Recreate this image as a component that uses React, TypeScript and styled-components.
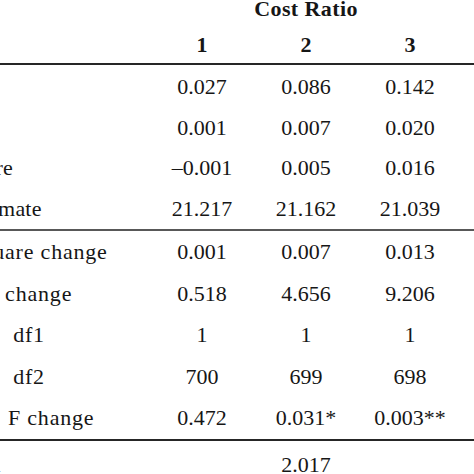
import React from "react";
import styled, { createGlobalStyle } from "styled-components";

const GlobalStyle = createGlobalStyle`
  html, body {
    margin: 0;
    padding: 0;
    background: #ffffff;
    overflow: hidden;
  }
  body {
    font-family: "Liberation Serif", "Times New Roman", serif;
    color: #161616;
  }
`;

const COLS = "198px 242px 104px 104px 104px 12px";

const Page = styled.div`
  width: 764px;
  margin-left: -290px;
  font-size: 22px;
`;

const TitleRow = styled.div`
  display: grid;
  grid-template-columns: ${COLS};
  margin-top: -3px;
  height: 24px;
  line-height: 24px;
`;

const Title = styled.div`
  grid-column: 3 / 6;
  text-align: center;
  font-weight: bold;
  letter-spacing: 0.4px;
`;

const HeaderRow = styled.div`
  display: grid;
  grid-template-columns: ${COLS};
  line-height: 24px;
  padding: 12px 0 6px;
  border-bottom: 2px solid #262626;
`;

const HeadCell = styled.div<{ $col: number }>`
  grid-column: ${(p) => p.$col};
  text-align: center;
  font-weight: bold;
`;

const Group = styled.div<{ $pad: number; $line?: string }>`
  padding-top: ${(p) => p.$pad}px;
  border-bottom: ${(p) => (p.$line ? `2px solid ${p.$line}` : "none")};
`;

const Row = styled.div<{ $h: number }>`
  display: grid;
  grid-template-columns: ${COLS};
  height: ${(p) => p.$h}px;
  line-height: ${(p) => p.$h}px;
  white-space: nowrap;
`;

const Label = styled.div<{ $wide?: boolean }>`
  grid-column: ${(p) => (p.$wide ? "1 / 3" : "2")};
  display: flex;
  justify-content: center;
  letter-spacing: ${(p) => (p.$wide ? "0.2px" : "0.8px")};
`;

const Value = styled.div<{ $col: number }>`
  grid-column: ${(p) => p.$col};
  display: flex;
  justify-content: center;
`;

type Line = { label: string; wide?: boolean; values: (string | null)[] };

const model: Line[] = [
  { label: "R", wide: true, values: ["0.027", "0.086", "0.142"] },
  { label: "R square", wide: true, values: ["0.001", "0.007", "0.020"] },
  { label: "Adjusted R square", wide: true, values: ["\u20130.001", "0.005", "0.016"] },
  { label: "Std. error of the estimate", wide: true, values: ["21.217", "21.162", "21.039"] },
];

const change: Line[] = [
  { label: "R square change", values: ["0.001", "0.007", "0.013"] },
  { label: "F change", values: ["0.518", "4.656", "9.206"] },
  { label: "df1", values: ["1", "1", "1"] },
  { label: "df2", values: ["700", "699", "698"] },
  { label: "Sig. F change", values: ["0.472", "0.031*", "0.003**"] },
];

const footer: Line[] = [{ label: "Durbin\u2013Watson", wide: true, values: [null, "2.017", null] }];

const Rows = ({ lines, h }: { lines: Line[]; h: number }) => (
  <>
    {lines.map((l) => (
      <Row key={l.label} $h={h}>
        <Label $wide={l.wide}>{l.label}</Label>
        {l.values.map((v, i) =>
          v === null ? null : (
            <Value key={i} $col={i + 3}>
              {v}
            </Value>
          )
        )}
      </Row>
    ))}
  </>
);

export default function App() {
  return (
    <>
      <GlobalStyle />
      <Page>
        <TitleRow>
          <Title>Cost Ratio</Title>
        </TitleRow>
        <HeaderRow>
          <HeadCell $col={3}>1</HeadCell>
          <HeadCell $col={4}>2</HeadCell>
          <HeadCell $col={5}>3</HeadCell>
        </HeaderRow>
        <Group $pad={2} $line="#585858">
          <Rows lines={model} h={40.5} />
        </Group>
        <Group $pad={0} $line="#262626">
          <Rows lines={change} h={41.5} />
        </Group>
        <Group $pad={3.5}>
          <Rows lines={footer} h={41} />
        </Group>
      </Page>
    </>
  );
}
